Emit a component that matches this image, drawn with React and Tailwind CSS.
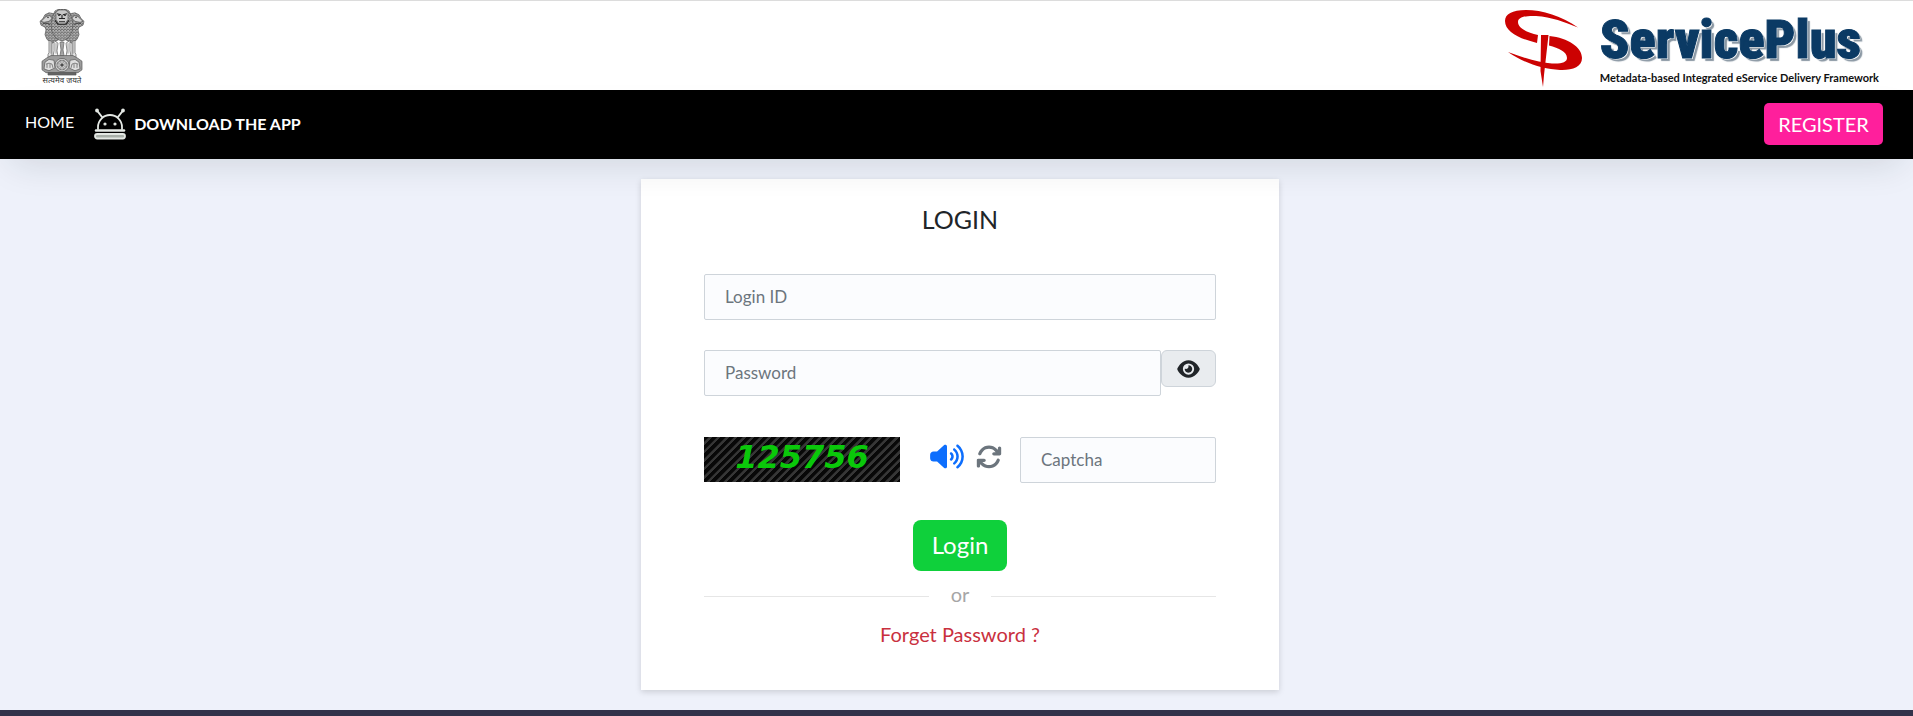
import React, { useState } from "react";
import { FaArrowsRotate, FaEye, FaVolumeHigh } from "react-icons/fa6";

const inputClass =
  "block h-[46px] w-full rounded-xs border border-[#ced4da] bg-[#fbfcfe] px-5 pb-0.5 text-[17px] text-gray-800 placeholder-[#6c757d] focus:outline-none focus:ring-2 focus:ring-blue-200";

function Emblem() {
  return (
    <svg width="48" height="80" viewBox="0 0 48 80" role="img" aria-label="State Emblem of India">
      <defs>
        <pattern id="mane" width="3" height="3" patternUnits="userSpaceOnUse">
          <rect width="3" height="3" fill="#a2a2a2" />
          <path d="M0 0l1.5 1.5L3 0M0 3l1.5-1.5" stroke="#4a4a4a" strokeWidth="0.6" fill="none" />
          <circle cx="0.5" cy="2" r="0.5" fill="#eee" />
        </pattern>
      </defs>
      <g stroke="#555" strokeWidth="0.7" strokeLinejoin="round" transform="scale(1 0.95)">
        {/* side lions */}
        <path d="M16 5l-5-1-4 2-2 4-3 3 1 4 4 2 1 3-1 5 2 5 5 4 7-4z" fill="url(#mane)" />
        <path d="M32 5l5-1 4 2 2 4 3 3-1 4-4 2-1 3 1 5-2 5-5 4-7-4z" fill="url(#mane)" />
        <path d="M8 8l4-1 2 3-3 3-5 1-3-1 3-3zM40 8l-4-1-2 3 3 3 5 1 3-1-3-3z" fill="#d4d4d4" />
        <path d="M5 15l5 0 2 2M43 15l-5 0-2 2M9 9h2M37 9h2" fill="none" stroke="#222" />
        {/* front lion */}
        <path d="M17 2l4-2h6l4 2 2 5 2 8-1 9-4 7-6 3-6-3-4-7-1-9 2-8z" fill="url(#mane)" />
        <path d="M18 3l3-2h6l3 2v8l-3 5h-6l-3-5z" fill="#c9c9c9" />
        <path d="M19 5l4 1M29 5l-4 1M24 6v4M21 10h6M17 12l3 4h8l3-4" fill="none" stroke="#222" strokeWidth="1.1" />
        <path d="M20 6h2v1h-2zM26 6h2v1h-2zM21 13h6v1h-6z" fill="#222" stroke="none" />
        {/* legs */}
        <path d="M11 33l3 1 0 9 0 7-4 1v-3l1-2zM37 33l-3 1 0 9 0 7 4 1v-3l-1-2z" fill="#e4e4e4" />
        <path d="M16 33l4 3-1 8 1 6h-5l1-6zM32 33l-4 3 1 8-1 6h5l-1-6z" fill="#f4f4f4" />
        <path d="M22 35h4l-1 8 1 6h-4l1-6z" fill="#bbb" />
        <path d="M13 33v14M35 33v14M18 36v11M30 36v11M24 36v12" stroke="#777" fill="none" />
        {/* abacus */}
        <path d="M8 52l5-3h22l5 3 4 3v9l-4 3H8l-4-3v-9z" fill="#9d9d9d" />
        <path d="M7 56l4-3 5 1 1 8-6 3-5-2zM41 56l-4-3-5 1-1 8 6 3 5-2z" fill="#dedede" />
        <path d="M8 58l3-1 3 1 1 4M9 58v4M12 58v4M40 58l-3-1-3 1-1 4M39 58v4M36 58v4" fill="none" stroke="#555" />
        <circle cx="24" cy="59" r="7" fill="#ccc" />
        <circle cx="24" cy="59" r="5" fill="#aaa" />
        <path d="M24 54v10M19 59h10M20.5 55.500l7 7M27.5 55.500l-7 7" stroke="#ddd" />
        <circle cx="24" cy="59" r="1.3" fill="#444" />
        <path d="M10 67h28v2.500H10z" fill="#666" />
      </g>
      <text x="24" y="74" textAnchor="middle" fontSize="8" fill="#333" fontFamily="'Noto Sans Devanagari', 'Noto Sans', sans-serif">
        सत्यमेव जयते
      </text>
    </svg>
  );
}

function ServicePlusLogo() {
  return (
    <div className="flex items-start gap-[18px]">
      <svg width="78" height="78" viewBox="0 0 78 78" className="mt-2" fill="#cc0202" aria-hidden="true">
        <path d="M74 18.500C58 7 38 1 22 1 8 1 1 5 1 12c0 11 15 18 32 22l1-8C22 23 14 19 14 13c0-5 8-6.500 18-6 16 1 28 6 42 11.500z" />
        <path d="M37 26h7.500L40 66l-1 12-2.500-16z" />
        <path d="M45.500 27C64 29 78 38 78 49c0 9-10 12.500-22 12C38 60 18 53 4 43c16 6 32 11 44 11.500 10 .5 15-1.500 15-5.500 0-6-8-10-18-12.500z" />
      </svg>
      <div className="pt-2">
        <div className="h-[62px] font-['Roboto_Condensed','Liberation_Sans_Narrow',sans-serif] text-[54px] leading-[62px] font-black text-[#0b3a64] [text-shadow:1px_1px_0_#fff,3px_3px_1px_#8a97a3] [-webkit-text-stroke:1px_#0b3a64]">
          ServicePlus
        </div>
        <p className="text-[11px] leading-[14px] font-bold whitespace-nowrap text-[#111]">
          Metadata-based Integrated eService Delivery Framework
        </p>
      </div>
    </div>
  );
}

function AndroidIcon() {
  return (
    <svg width="32" height="32" viewBox="0 0 32 32" fill="none" stroke="#e4e8e4" strokeWidth="1.800" strokeLinecap="round" aria-hidden="true">
      <path d="M4 21v-2a12 12 0 0 1 24 0v2" />
      <path d="M3 2.500l5 6.500M29 2.500l-5 6.500" strokeWidth="2" />
      <circle cx="3" cy="2.500" r="1" fill="#e4e8e4" />
      <circle cx="29" cy="2.500" r="1" fill="#e4e8e4" />
      <path d="M2 22.500h28" strokeWidth="2.500" />
      <rect x="1" y="26" width="30" height="4.500" rx="2.200" fill="#a9b0a9" />
      <circle cx="11" cy="16" r="0.700" fill="#e4e8e4" />
      <circle cx="21" cy="16" r="0.700" fill="#e4e8e4" />
    </svg>
  );
}

export default function App() {
  const [showPassword, setShowPassword] = useState(false);

  return (
    <div className="min-h-screen bg-[#eef1fa] font-[Lato,sans-serif] text-[#212529]">
      <header className="flex h-[90px] items-start justify-between overflow-hidden border-t border-[#dcdcdc] bg-white pr-[34px] pl-[38px]">
        <a href="#" className="pt-2">
          <Emblem />
        </a>
        <a href="#">
          <ServicePlusLogo />
        </a>
      </header>

      <nav className="relative z-10 flex h-[69px] items-center justify-between bg-black pr-[30px] pb-0.5 pl-[25px] text-white shadow-[0_16px_36px_-12px_rgba(20,40,40,0.14)]">
        <div className="flex items-center gap-5">
          <a href="#" className="pb-1 text-[16px] leading-6">
            HOME
          </a>
          <a href="#" className="flex items-center gap-2 text-[16px] leading-6 font-bold">
            <AndroidIcon />
            DOWNLOAD THE APP
          </a>
        </div>
        <button type="button" className="h-[42px] w-[119px] rounded-[5px] bg-[#ff1f9c] text-[20px]">
          REGISTER
        </button>
      </nav>

      <main className="pt-5 pb-5 pl-[7px]">
        <form
          className="mx-auto w-full max-w-[638px] bg-white px-[63px] pt-6 pb-11 shadow-[0_2px_6px_rgba(0,0,0,0.15)]"
          onSubmit={(e) => e.preventDefault()}
        >
          <h1 className="mb-[39px] text-center text-[25px] leading-8">LOGIN</h1>

          <input type="text" placeholder="Login ID" aria-label="Login ID" className={inputClass} />

          <div className="mt-[30px] flex items-start">
            <input
              type={showPassword ? "text" : "password"}
              placeholder="Password"
              aria-label="Password"
              className={inputClass}
            />
            <button
              type="button"
              aria-label="Show password"
              onClick={() => setShowPassword(!showPassword)}
              className="flex h-[37px] w-[55px] shrink-0 items-center justify-center rounded-md border border-[#ced4da] bg-[#e9ecef]"
            >
              <FaEye className="h-5 w-[23px]" />
            </button>
          </div>

          <div className="mt-[41px] flex items-start justify-between">
            <div className="h-[45px] w-[196px] overflow-hidden bg-[repeating-linear-gradient(135deg,#080808_0px,#080808_3px,#363636_4px,#363636_6px)] text-center font-['DejaVu_Sans',sans-serif] text-[32px] leading-10 font-bold text-[#0ac80a] italic">
              125756
            </div>
            <div className="flex items-center gap-3 pt-1.5 pl-3">
              <button type="button" aria-label="Play captcha" className="text-[#0d6efd]">
                <FaVolumeHigh className="h-[27px] w-[34px]" />
              </button>
              <button type="button" aria-label="Refresh captcha" className="text-[#6c757d]">
                <FaArrowsRotate className="h-[26px] w-[26px]" />
              </button>
            </div>
            <div className="w-[196px]">
              <input type="text" placeholder="Captcha" aria-label="Captcha" className={inputClass} />
            </div>
          </div>

          <button
            type="submit"
            className="mx-auto mt-[37px] block h-[51px] w-[94px] rounded-lg bg-[#0fd03b] pb-0.5 text-[24px] text-white"
          >
            Login
          </button>

          <div className="mt-[11px] flex items-center text-[20px] leading-6 text-[#a6a6a6]">
            <span className="h-px flex-1 bg-[#e6e6e6]" />
            <span className="w-[62px] pb-1 text-center">or</span>
            <span className="h-px flex-1 bg-[#e6e6e6]" />
          </div>

          <p className="mt-3 text-center text-[20px] leading-6">
            <a href="#" className="text-[#c9303e]">
              Forget Password ?
            </a>
          </p>
        </form>
      </main>

      <footer className="h-1.5 bg-[#32324a]" />
    </div>
  );
}
